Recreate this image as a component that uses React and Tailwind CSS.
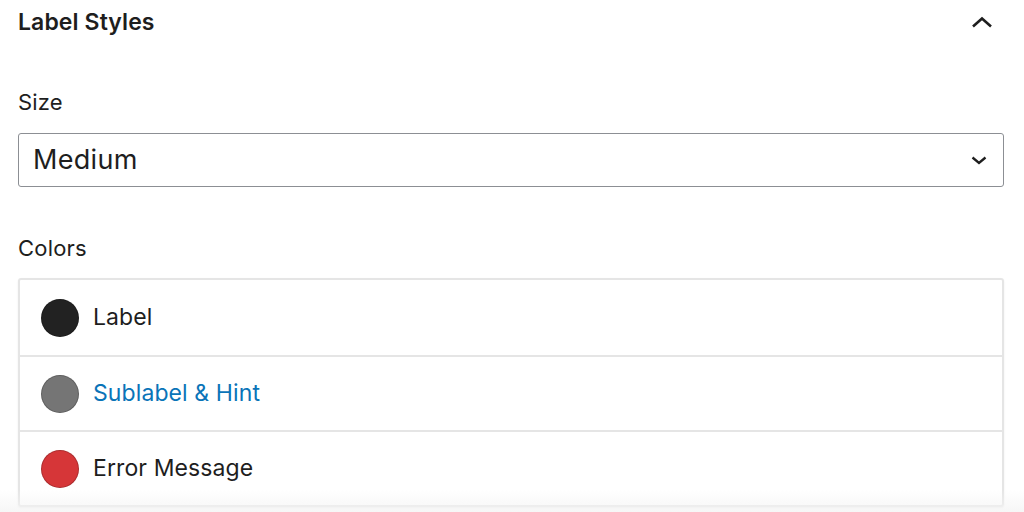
import React from 'react';

const colors = [
  { name: 'Label', swatch: 'bg-[#222222]', text: 'text-[#1e1e1e]' },
  { name: 'Sublabel & Hint', swatch: 'bg-[#757575]', text: 'text-[#0a74b8]' },
  { name: 'Error Message', swatch: 'bg-[#d63638]', text: 'text-[#1e1e1e]' },
];

const ChevronUp = () => (
  <svg width="24" height="24" viewBox="0 0 24 24" className="text-[#1e1e1e]">
    <path d="M3 16.5 L12 8.5 L21 16.5" fill="none" stroke="currentColor" strokeWidth="2.6" />
  </svg>
);

const ChevronDown = () => (
  <svg width="20" height="20" viewBox="0 0 20 20" className="text-[#1e1e1e]">
    <path d="M3.5 7.5 L10 13 L16.5 7.5" fill="none" stroke="currentColor" strokeWidth="2.3" />
  </svg>
);

export default function App() {
  return (
    <div
      className="relative w-[1024px] h-[512px] overflow-hidden bg-white text-[#1e1e1e]"
      style={{ fontFamily: 'Inter, "Liberation Sans", sans-serif' }}
    >
      <div className="pl-[18px] pr-[20px] pt-[8px]">
        <div className="flex items-center justify-between h-[28px]">
          <h2 className="text-[23px] font-semibold tracking-[0.1px]">Label Styles</h2>
          <div className="mr-[10px]">
            <ChevronUp />
          </div>
        </div>

        <div className="mt-[51px] text-[22px] leading-[30px] tracking-[0.2px]">Size</div>
        <div className="mt-[16px] h-[54px] flex items-center justify-between border border-[#8c8f94] rounded-[3px] pl-[14px] pr-[14px]">
          <span className="text-[27px] tracking-[0.3px]">Medium</span>
          <ChevronDown />
        </div>

        <div className="mt-[46px] text-[22px] leading-[30px] tracking-[0.2px]">Colors</div>
        <div className="mt-[15px] border-2 border-[#e5e5e5] rounded-[3px] shadow-[0_1px_2px_rgba(0,0,0,0.08)]">
          {colors.map((c, i) => (
            <div
              key={c.name}
              className={`flex items-center h-[75px] pl-[21px] ${i > 0 ? 'border-t-2 border-[#e5e5e5]' : ''}`}
            >
              <span className={`w-[38px] h-[38px] rounded-full ${c.swatch} border border-black/20`} />
              <span className={`ml-[14px] text-[23px] tracking-[0.1px] ${c.text}`}>{c.name}</span>
            </div>
          ))}
        </div>
      </div>
      <div className="pointer-events-none absolute left-0 right-0 bottom-0 h-[22px] bg-gradient-to-b from-white/0 to-[#f4f4f4]/80" />
    </div>
  );
}
